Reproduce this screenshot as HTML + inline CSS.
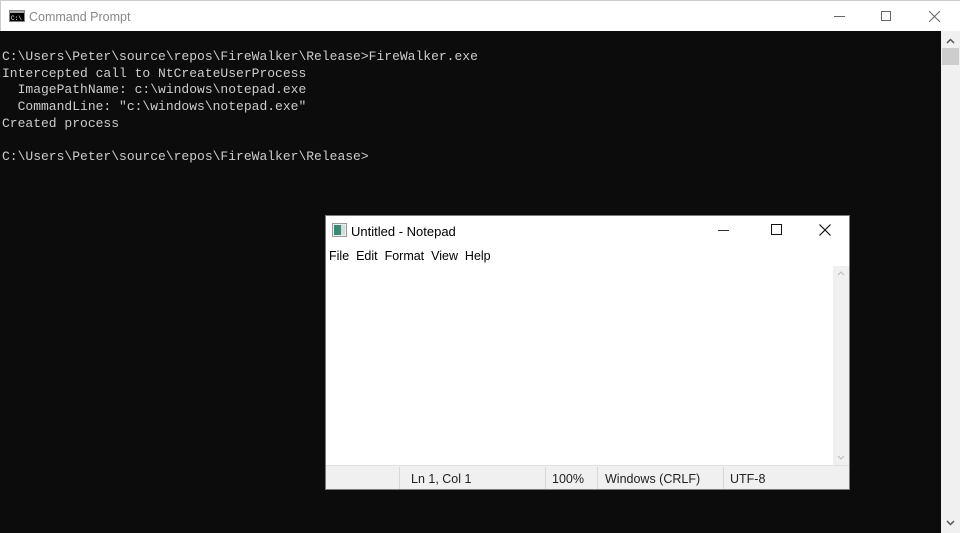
<!DOCTYPE html>
<html><head><style>
*{margin:0;padding:0;box-sizing:border-box}
body{width:960px;height:533px;overflow:hidden;background:#fff;position:relative;font-family:"Liberation Sans",sans-serif}
.tb{position:absolute;left:0;top:0;width:960px;height:31px;background:#fff;border-top:1px solid #ccc;border-left:1px solid #ccc}
.tb .t{position:absolute;left:28px;top:9px;font-size:12.5px;color:#888}
.con{position:absolute;left:0;top:31px;width:941px;height:502px;background:#0c0c0c}
pre{position:absolute;left:2px;top:49px;font-family:"Liberation Mono",monospace;font-size:13px;line-height:16.7px;color:#ccc}
.sb{position:absolute;left:941px;top:31px;width:19px;height:502px;background:#f0f0f0}
.np{position:absolute;left:325px;top:215px;width:525px;height:275px;background:#fff;border:1px solid #7a7a7a}
.st{position:absolute;left:0;bottom:0;width:523px;height:24px;background:#f0f0f0;border-top:1px solid #e0e0e0;font-size:12.5px;color:#222}
.st span{position:absolute;top:6px}
.st i{position:absolute;top:1px;width:1px;height:22px;background:#d7d7d7}
</style></head><body>
<div class="tb">
<svg style="position:absolute;left:8px;top:9px" width="16" height="12"><rect x="0.5" y="0.5" width="15" height="11" fill="#000" stroke="#888"/><rect x="1" y="1" width="14" height="2" fill="#aaa"/><text x="2" y="10" font-size="6" fill="#fff" font-family="Liberation Mono">C:\</text></svg>
<div class="t">Command Prompt</div>
<div style="position:absolute;left:833px;top:15px;width:11px;height:1px;background:#666"></div>
<div style="position:absolute;left:880px;top:10px;width:10px;height:10px;border:1px solid #666"></div>
<svg style="position:absolute;left:928px;top:10px" width="11" height="11"><path d="M0 0L11 11M11 0L0 11" stroke="#666" stroke-width="1"/></svg>
</div>
<div class="con"></div>
<pre>C:\Users\Peter\source\repos\FireWalker\Release>FireWalker.exe
Intercepted call to NtCreateUserProcess
  ImagePathName: c:\windows\notepad.exe
  CommandLine: "c:\windows\notepad.exe"
Created process

C:\Users\Peter\source\repos\FireWalker\Release></pre>
<div class="sb">
<svg style="position:absolute;left:5px;top:7px" width="9" height="6"><path d="M1 5L4.5 1.5L8 5" stroke="#555" stroke-width="1.5" fill="none"/></svg>
<div style="position:absolute;left:1px;top:17px;width:17px;height:17px;background:#cdcdcd"></div>
<svg style="position:absolute;left:5px;top:489px" width="9" height="6"><path d="M1 1L4.5 4.5L8 1" stroke="#555" stroke-width="1.5" fill="none"/></svg>
</div>
<div class="np">
<svg style="position:absolute;left:6px;top:7px" width="16" height="14"><rect x="0.5" y="0.5" width="14" height="13" fill="#eee" stroke="#999"/><rect x="2" y="2" width="7" height="10" fill="#3a8a7a"/><rect x="9" y="2" width="4" height="10" fill="#cfe0dc"/></svg>
<div style="position:absolute;left:25px;top:8px;font-size:13px;color:#000">Untitled - Notepad</div>
<div style="position:absolute;left:392px;top:14px;width:11px;height:1px;background:#333"></div>
<div style="position:absolute;left:445px;top:8px;width:11px;height:11px;border:1px solid #111"></div>
<svg style="position:absolute;left:493px;top:8px" width="12" height="12"><path d="M0.5 0.5L11.5 11.5M11.5 0.5L0.5 11.5" stroke="#111" stroke-width="1.2"/></svg>
<div style="position:absolute;left:3px;top:33px;font-size:12.5px;color:#000">File&nbsp; Edit&nbsp; Format&nbsp; View&nbsp; Help</div>
<div style="position:absolute;left:507px;top:50px;width:16px;height:200px;background:#f0f0f0">
<svg style="position:absolute;left:4px;top:5px" width="8" height="5"><path d="M1 4L4 1L7 4" stroke="#bbb" fill="none"/></svg>
<svg style="position:absolute;left:4px;top:189px" width="8" height="5"><path d="M1 1L4 4L7 1" stroke="#bbb" fill="none"/></svg>
</div>
<div class="st">
<i style="left:73px"></i><span style="left:85px">Ln 1, Col 1</span>
<i style="left:219px"></i><span style="left:226px">100%</span>
<i style="left:271px"></i><span style="left:279px">Windows (CRLF)</span>
<i style="left:397px"></i><span style="left:404px">UTF-8</span>
</div>
</div>
</body></html>
